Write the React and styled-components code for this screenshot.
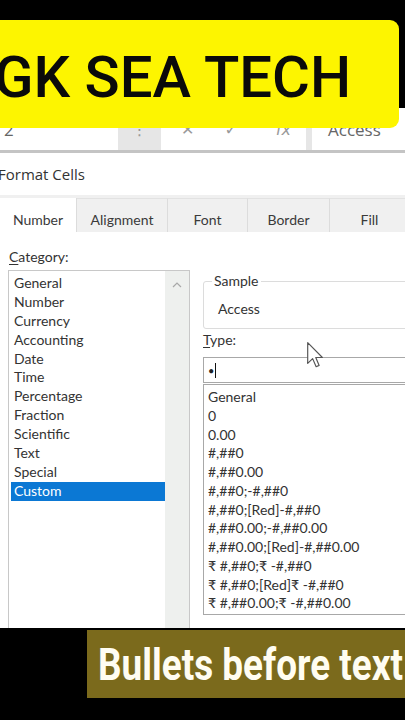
import styled, { createGlobalStyle } from 'styled-components';

const Global = createGlobalStyle`
    html, body {
        margin: 0;
        padding: 0;
        background: #000;
    }
    body {
        width: 405px;
        height: 720px;
        overflow: hidden;
    }
`;

const Page = styled.div`
    position: relative;
    width: 405px;
    height: 720px;
    overflow: hidden;
    display: flex;
    flex-direction: column;
    background: #000;
    font-family: Lato, "Open Sans", sans-serif;
`;

const TopSpace = styled.div`
    height: 108px;
    flex: none;
`;

const FormulaBar = styled.div`
    height: 42px;
    flex: none;
    display: flex;
    background: #e6e6e6;
    border-bottom: 3px solid #c4c4c4;
    font-family: "Open Sans", sans-serif;
    font-size: 17px;
    color: #666;
`;

const BarCell = styled.div`
    width: ${(p) => p.$w}px;
    flex: ${(p) => (p.$w ? 'none' : 1)};
    background: ${(p) => (p.$grey ? '#e6e6e6' : '#fff')};
    display: flex;
    align-items: center;
    justify-content: ${(p) => p.$justify || 'flex-start'};
    padding-left: ${(p) => p.$pad || 0}px;
    gap: ${(p) => p.$gap || 0}px;
    margin-right: ${(p) => p.$mr || 0}px;
    box-sizing: border-box;
`;

const BarGlyph = styled.span`
    font-family: "DejaVu Sans", sans-serif;
    font-size: 16px;
    color: #999;
    font-style: ${(p) => (p.$italic ? 'italic' : 'normal')};
    margin-left: ${(p) => p.$ml || 0}px;
`;

const Dialog = styled.div`
    height: 475px;
    flex: none;
    background: #fff;
    display: flex;
    flex-direction: column;
    overflow: hidden;
`;

const Title = styled.div`
    height: 42px;
    flex: none;
    display: flex;
    align-items: center;
    margin-left: -2px;
    font-family: "Open Sans", sans-serif;
    font-size: 15px;
    color: #333;
`;

const TabBar = styled.div`
    height: 37px;
    flex: none;
    display: flex;
    background: #f0f0f0;
`;

const Tab = styled.div`
    width: ${(p) => p.$w}px;
    flex: none;
    display: flex;
    align-items: flex-end;
    justify-content: center;
    padding-bottom: 3px;
    box-sizing: border-box;
    margin-top: 3px;
    background: ${(p) => (p.$active ? '#fff' : '#f0f0f0')};
    border-right: 1px solid #dcdcdc;
    border-top: ${(p) => (p.$active ? 'none' : '1px solid #e2e2e2')};
    font-size: 14px;
    color: #3a3a3a;
    line-height: 18px;
`;

const Body = styled.div`
    flex: 1;
    display: flex;
    gap: 13px;
    padding: 16px 0 0 8px;
    overflow: hidden;
`;

const LeftCol = styled.div`
    width: 182px;
    flex: none;
    display: flex;
    flex-direction: column;
`;

const RightCol = styled.div`
    width: 260px;
    flex: none;
    display: flex;
    flex-direction: column;
    padding-top: 24px;
`;

const Label = styled.div`
    font-size: 14px;
    line-height: 18px;
    color: #333;
    margin-left: ${(p) => p.$ml || 0}px;
    margin-bottom: ${(p) => p.$mb || 0}px;
    margin-top: ${(p) => p.$mt || 0}px;

    & u {
        text-decoration-thickness: 1px;
        text-underline-offset: 2px;
    }
`;

const ListBox = styled.div`
    flex: 1;
    display: flex;
    border: 1px solid #c8c8c8;
    border-bottom: none;
    background: #fff;
`;

const Items = styled.div`
    flex: 1;
    padding: 3px 0 0 2px;
`;

const Item = styled.div`
    height: 18.9px;
    line-height: 18.9px;
    padding-left: 3px;
    font-size: 14px;
    color: ${(p) => (p.$selected ? '#fff' : '#333')};
    background: ${(p) => (p.$selected ? '#0b78d4' : 'transparent')};
`;

const ScrollTrack = styled.div`
    width: 24px;
    flex: none;
    background: #eef0ee;
    display: flex;
    justify-content: center;
    padding-top: 11px;
    box-sizing: border-box;
`;

const SampleBox = styled.fieldset`
    margin: 0;
    padding: 4px 0 7px 14px;
    border: 1px solid #dcdcdc;
    border-radius: 3px;
    height: 44px;
    box-sizing: content-box;

    & legend {
        padding: 0 2px;
        margin-left: -6px;
        font-size: 14px;
        line-height: 18px;
        color: #333;
    }
`;

const SampleText = styled.div`
    font-size: 14px;
    line-height: 18px;
    color: #333;
    padding-top: 6px;
`;

const TypeInput = styled.div`
    height: 26px;
    flex: none;
    border: 1px solid #a8a8a8;
    box-sizing: border-box;
    display: flex;
    align-items: center;
    padding-left: 4px;
    font-size: 11px;
    color: #222;
`;

const Caret = styled.span`
    display: inline-block;
    width: 1px;
    height: 15px;
    background: #111;
    margin-left: 1px;
`;

const TypeList = styled.div`
    height: 231px;
    flex: none;
    margin-top: 1px;
    border: 1px solid #a8a8a8;
    box-sizing: border-box;
    padding: 3px 0 0 4px;
`;

const TypeItem = styled.div`
    height: 18.75px;
    line-height: 18.75px;
    font-size: 14px;
    color: #333;
    white-space: nowrap;
`;

const Bottom = styled.div`
    flex: 1;
    background: #000;
    padding: 2px 0 0 87px;
`;

const Caption = styled.div`
    height: 68px;
    background: #7b6a1c;
    display: flex;
    align-items: center;
    padding-left: 11px;
    overflow: hidden;
`;

const CaptionText = styled.span`
    display: inline-block;
    font-family: Roboto, sans-serif;
    font-weight: 700;
    font-size: 45px;
    color: #fffdf2;
    white-space: nowrap;
    transform: scaleX(0.82);
    transform-origin: left center;
`;

const Banner = styled.div`
    position: absolute;
    top: 20px;
    left: 0;
    width: 399px;
    height: 108px;
    padding-top: 6px;
    box-sizing: border-box;
    background: #fdf500;
    border-radius: 0 9px 9px 0;
    display: flex;
    align-items: center;
    overflow: hidden;
`;

const BannerText = styled.span`
    font-family: Roboto, sans-serif;
    font-weight: 500;
    font-size: 58px;
    color: #0a0a0a;
    margin-left: -6px;
    white-space: nowrap;
`;

const Cursor = styled.svg`
    position: absolute;
    left: 307px;
    top: 342px;
`;

const categories = [
    'General', 'Number', 'Currency', 'Accounting', 'Date', 'Time',
    'Percentage', 'Fraction', 'Scientific', 'Text', 'Special', 'Custom',
];

const types = [
    'General', '0', '0.00', '#,##0', '#,##0.00', '#,##0;-#,##0',
    '#,##0;[Red]-#,##0', '#,##0.00;-#,##0.00', '#,##0.00;[Red]-#,##0.00',
    '₹ #,##0;₹ -#,##0', '₹ #,##0;[Red]₹ -#,##0', '₹ #,##0.00;₹ -#,##0.00',
];

const tabs = [
    { name: 'Number', w: 77, active: true },
    { name: 'Alignment', w: 91 },
    { name: 'Font', w: 80 },
    { name: 'Border', w: 82 },
    { name: 'Fill', w: 80 },
];

const App = () => (
    <Page>
        <Global />
        <TopSpace />
        <FormulaBar>
            <BarCell $w={118} $pad={4}>2</BarCell>
            <BarCell $w={43} $grey $justify="center"><BarGlyph>⋮</BarGlyph></BarCell>
            <BarCell $w={145} $pad={20} $gap={30} $mr={6}>
                <BarGlyph>✕</BarGlyph>
                <BarGlyph>✓</BarGlyph>
                <BarGlyph $italic $ml={8}>fx</BarGlyph>
            </BarCell>
            <BarCell $pad={16}>Access</BarCell>
        </FormulaBar>
        <Dialog>
            <Title>Format Cells</Title>
            <TabBar>
                {tabs.map((t) => (
                    <Tab key={t.name} $w={t.w} $active={t.active}>{t.name}</Tab>
                ))}
            </TabBar>
            <Body>
                <LeftCol>
                    <Label $ml={1} $mb={4}><u>C</u>ategory:</Label>
                    <ListBox>
                        <Items>
                            {categories.map((c) => (
                                <Item key={c} $selected={c === 'Custom'}>{c}</Item>
                            ))}
                        </Items>
                        <ScrollTrack>
                            <svg width="10" height="6" viewBox="0 0 10 6">
                                <polyline points="1,5 5,1 9,5" fill="none" stroke="#a8a8a8" strokeWidth="1.2" />
                            </svg>
                        </ScrollTrack>
                    </ListBox>
                </LeftCol>
                <RightCol>
                    <SampleBox>
                        <legend>Sample</legend>
                        <SampleText>Access</SampleText>
                    </SampleBox>
                    <Label $mt={2} $mb={8}><u>T</u>ype:</Label>
                    <TypeInput>•<Caret /></TypeInput>
                    <TypeList>
                        {types.map((t) => (
                            <TypeItem key={t}>{t}</TypeItem>
                        ))}
                    </TypeList>
                </RightCol>
            </Body>
        </Dialog>
        <Bottom>
            <Caption>
                <CaptionText>Bullets before text</CaptionText>
            </Caption>
        </Bottom>
        <Banner>
            <BannerText>GK SEA TECH</BannerText>
        </Banner>
        <Cursor width="17" height="26" viewBox="0 0 13 20">
            <path d="M0.5,0.5 L0.5,16.5 L4.3,12.8 L7,19 L9.3,18 L6.7,11.9 L11.8,11.9 Z"
                fill="#fff" stroke="#555" strokeWidth="0.9" strokeLinejoin="round" />
        </Cursor>
    </Page>
);

export default App;
